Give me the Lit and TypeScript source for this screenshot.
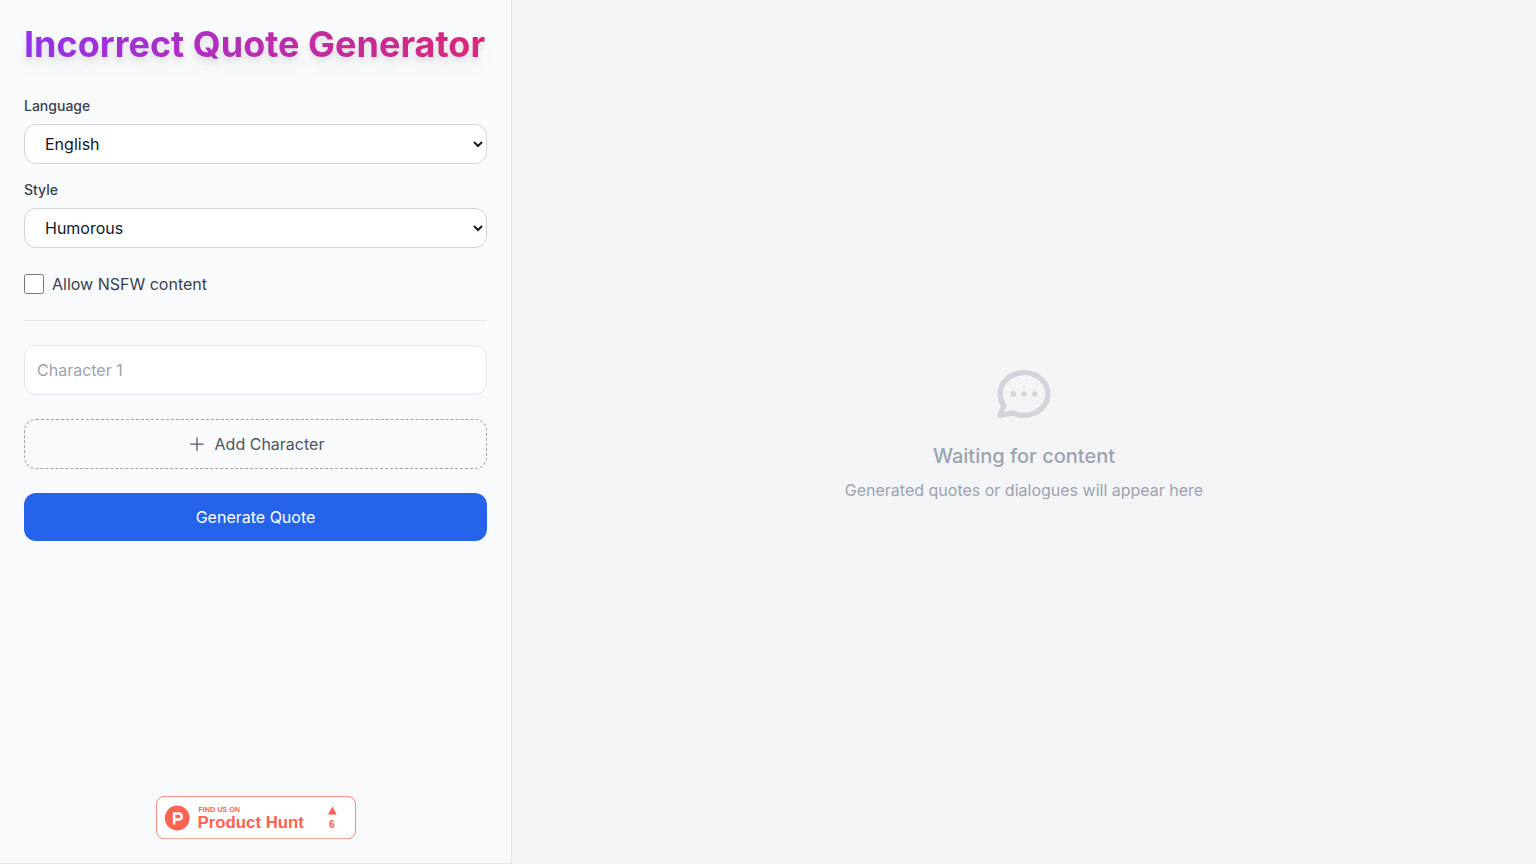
import { LitElement, html, css } from "lit";
import { customElement, state } from "lit/decorators.js";

const LANGUAGES = ["English", "Español", "Français", "Deutsch"];
const STYLES = ["Humorous", "Romantic", "Dramatic", "Sarcastic"];

@customElement("product-hunt-badge")
class ProductHuntBadge extends LitElement {
  static styles = css`
    .link {
      display: block;
    }
    .badge {
      display: block;
      width: 200px;
      height: auto;
    }
    .label {
      font-family: Helvetica, "Liberation Sans", Arial, sans-serif;
      font-weight: 700;
      fill: #ff6154;
    }
    .small {
      font-size: 9px;
    }
    .name {
      font-size: 21px;
    }
    .votes {
      font-size: 13px;
      text-anchor: middle;
    }
  `;

  render() {
    return html`
      <a class="link" href="#" aria-label="Find us on Product Hunt">
        <svg class="badge" viewBox="0 0 250 54">
          <rect x="0.5" y="0.5" width="249" height="53" rx="10" fill="#fff" stroke="#ff6154" />
          <text class="label small" x="53" y="20">FIND US ON</text>
          <text class="label name" x="52" y="40">Product Hunt</text>
          <path d="M220.5 13 L226 23 H215 Z" fill="#ff6154" />
          <text class="label votes" x="220" y="40">6</text>
          <g transform="translate(11 12)">
            <circle cx="15.5" cy="15.5" r="15.5" fill="#ff6154" />
            <path
              fill="#fff"
              fill-rule="evenodd"
              d="M17.433 15.956H13.093V11.306H17.433C18.702 11.306 19.731 12.347 19.731 13.631C19.731 14.915 18.702 15.956 17.433 15.956M17.433 8.206H10.029V23.706H13.093V19.056H17.433C20.394 19.056 22.794 16.627 22.794 13.631C22.794 10.635 20.394 8.206 17.433 8.206"
            />
          </g>
        </svg>
      </a>
    `;
  }
}

@customElement("app-root")
class AppRoot extends LitElement {
  @state() characters: string[] = [""];

  static styles = css`
    :host {
      display: block;
      font-family: Inter, "Noto Sans", sans-serif;
      font-size: 16px;
      line-height: 24px;
      color: #111827;
    }
    *,
    *::before,
    *::after {
      box-sizing: border-box;
    }
    .layout {
      display: grid;
      grid-template-columns: 1fr 2fr;
      min-height: 100vh;
      background: #f3f4f6;
    }
    .panel {
      display: flex;
      flex-direction: column;
      justify-content: space-between;
      gap: 24px;
      min-width: 0;
      padding: 24px;
      background: #f9fafc;
      border-right: 1px solid #e5e7eb;
      border-bottom: 1px solid #e5e7eb;
    }
    .title {
      margin: 0 0 32px;
      font-size: 36px;
      line-height: 40px;
      font-weight: 700;
      white-space: nowrap;
      color: transparent;
      background: linear-gradient(to right, #9333ea, #db2777);
      -webkit-background-clip: text;
      background-clip: text;
      filter: drop-shadow(0 10px 8px rgba(0, 0, 0, 0.04)) drop-shadow(0 4px 3px rgba(0, 0, 0, 0.1));
    }
    .form {
      display: flex;
      flex-direction: column;
      gap: 24px;
    }
    .options {
      display: flex;
      flex-direction: column;
      gap: 24px;
      padding-bottom: 24px;
      border-bottom: 1px solid #e5e7eb;
    }
    .fields {
      display: flex;
      flex-direction: column;
      gap: 16px;
    }
    .field {
      display: flex;
      flex-direction: column;
      gap: 8px;
    }
    .label {
      font-size: 14px;
      line-height: 20px;
      font-weight: 500;
      color: #374151;
    }
    .select,
    .input,
    .add,
    .generate {
      width: 100%;
      margin: 0;
      font: inherit;
      border-radius: 12px;
    }
    .select {
      height: 40px;
      padding: 0 0 0 16px;
      color: #111827;
      background-color: #fff;
      border: 1px solid #d1d5db;
    }
    .check {
      display: flex;
      align-items: center;
      gap: 8px;
      color: #374151;
    }
    .box {
      width: 20px;
      height: 20px;
      margin: 0;
    }
    .input {
      display: block;
      padding: 12px;
      color: #111827;
      background: #fff;
      border: 1px solid #e2e8f0;
    }
    .input::placeholder {
      color: #9ca3af;
    }
    .add {
      display: flex;
      align-items: center;
      justify-content: center;
      gap: 8px;
      padding: 12px;
      color: #4b5563;
      background: transparent;
      border: 1px dashed #9ca3af;
      cursor: pointer;
    }
    .plus {
      width: 20px;
      height: 20px;
    }
    .generate {
      padding: 12px;
      color: #fff;
      background: #2563eb;
      border: 0;
      cursor: pointer;
    }
    .footer {
      display: flex;
      justify-content: center;
    }
    .result {
      display: flex;
      flex-direction: column;
      align-items: center;
      justify-content: center;
      padding: 24px;
      text-align: center;
      color: #9ca3af;
    }
    .bubble {
      width: 64px;
      height: 64px;
      margin-bottom: 16px;
      color: #d1d5db;
    }
    .waiting {
      margin: 0 0 8px;
      font-size: 20px;
      line-height: 28px;
      font-weight: 500;
    }
    .hint {
      margin: 0;
    }
  `;

  private addCharacter() {
    this.characters = [...this.characters, ""];
  }

  render() {
    return html`
      <main class="layout">
        <section class="panel">
          <div>
            <h1 class="title">Incorrect Quote Generator</h1>
            <form class="form" @submit=${(e: Event) => e.preventDefault()}>
              <div class="options">
                <div class="fields">
                  <div class="field">
                    <label class="label" for="language">Language</label>
                    <select class="select" id="language">
                      ${LANGUAGES.map((l) => html`<option>${l}</option>`)}
                    </select>
                  </div>
                  <div class="field">
                    <label class="label" for="style">Style</label>
                    <select class="select" id="style">
                      ${STYLES.map((s) => html`<option>${s}</option>`)}
                    </select>
                  </div>
                </div>
                <label class="check">
                  <input class="box" type="checkbox" />
                  <span>Allow NSFW content</span>
                </label>
              </div>
              ${this.characters.map(
                (_, i) => html`<input
                  class="input"
                  type="text"
                  placeholder="Character ${i + 1}"
                  aria-label="Character ${i + 1}"
                />`
              )}
              <button class="add" type="button" @click=${this.addCharacter}>
                <svg class="plus" viewBox="0 0 24 24" fill="none" stroke="currentColor" stroke-width="1.5" stroke-linecap="round">
                  <path d="M12 4.5v15m7.5-7.5h-15" />
                </svg>
                Add Character
              </button>
              <button class="generate" type="submit">Generate Quote</button>
            </form>
          </div>
          <footer class="footer"><product-hunt-badge></product-hunt-badge></footer>
        </section>
        <section class="result">
          <svg class="bubble" viewBox="0 0 24 24" fill="none" stroke="currentColor" stroke-width="2" stroke-linecap="round" stroke-linejoin="round">
            <path
              d="M8 12h.01M12 12h.01M16 12h.01M21 12c0 4.418-4.03 8-9 8a9.863 9.863 0 01-4.255-.949L3 20l1.395-3.72C3.512 15.042 3 13.574 3 12c0-4.418 4.03-8 9-8s9 3.582 9 8z"
            />
          </svg>
          <h2 class="waiting">Waiting for content</h2>
          <p class="hint">Generated quotes or dialogues will appear here</p>
        </section>
      </main>
    `;
  }
}
